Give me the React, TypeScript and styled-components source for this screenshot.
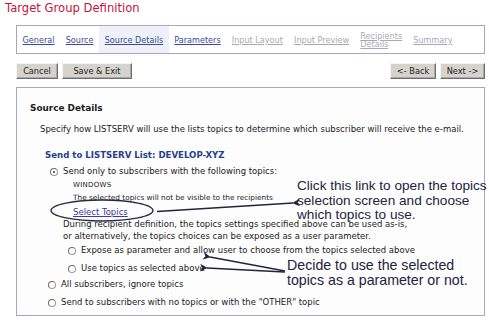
import styled, { createGlobalStyle } from 'styled-components';

const GlobalStyle = createGlobalStyle`
  html, body {
    margin: 0;
    padding: 0;
    background: #ffffff;
  }
  body {
    font-family: "DejaVu Sans", Verdana, sans-serif;
    color: #222222;
  }
`;

const Page = styled.div`
  position: relative;
  width: 489px;
  height: 328px;
  overflow: hidden;
  padding: 0 4px 0 5px;
  box-sizing: border-box;
`;

const Title = styled.h1`
  margin: 0;
  padding-top: 1px;
  font-size: 11.6px;
  font-weight: normal;
  color: #c4143c;
  line-height: 15px;
`;

const Content = styled.div`
  margin-left: 11px;
  width: 469px;
`;

const TabBar = styled.nav`
  margin-top: 9px;
  height: 29px;
  border: 1px solid #a7a3c9;
  box-sizing: border-box;
  display: flex;
  align-items: stretch;
`;

const Tab = styled.a<{ $active?: boolean; $disabled?: boolean }>`
  display: flex;
  align-items: center;
  padding: 1px 5.6px 0;
  font-size: 8.1px;
  line-height: 8.5px;
  text-decoration: underline;
  color: ${({ $disabled }) => ($disabled ? '#a9a9b4' : '#3a4a9c')};
  background: ${({ $active }) => ($active ? '#eef1f8' : 'transparent')};
  white-space: nowrap;
`;

const ButtonRow = styled.div`
  margin-top: 9px;
  display: flex;
  justify-content: space-between;
`;

const ButtonGroup = styled.div`
  display: flex;
  gap: 4px;
`;

const Button = styled.button<{ $w: number }>`
  width: ${({ $w }) => $w}px;
  height: 16px;
  padding: 0;
  font-family: "DejaVu Sans", Verdana, sans-serif;
  font-size: 8.2px;
  color: #222222;
  background: #d6d3cd;
  border: 1px solid;
  border-color: #f4f4f4 #6e6e6e #6e6e6e #f4f4f4;
  box-shadow: inset -1px -1px 0 #a8a8a8;
`;

const Panel = styled.section`
  margin-top: 8px;
  height: 229px;
  border: 1px solid #a7a3c9;
  box-sizing: border-box;
  background: #fdfdfd;
  padding: 15px 0 0 13px;
  font-size: 8.5px;
`;

const PanelTitle = styled.h2`
  margin: 0;
  font-size: 8.9px;
  font-weight: bold;
  color: #1c1c1c;
  line-height: 11px;
`;

const Intro = styled.p`
  margin: 10px 0 0 10px;
  line-height: 11px;
`;

const ListTitle = styled.h3`
  margin: 15px 0 0 15px;
  font-size: 8.6px;
  font-weight: bold;
  color: #27408e;
  line-height: 11px;
`;

const Option = styled.div<{ $indent: number; $top: number }>`
  display: flex;
  align-items: center;
  margin: ${({ $top }) => $top}px 0 0 ${({ $indent }) => $indent}px;
  line-height: 11px;
`;

const Radio = styled.span<{ $checked?: boolean }>`
  position: relative;
  width: 6px;
  height: 6px;
  border-radius: 50%;
  border: 1px solid #9a9a9a;
  border-top-color: #6c6c6c;
  border-left-color: #6c6c6c;
  background: #ffffff;
  margin-right: 5px;
  flex: none;

  &::after {
    content: '';
    display: ${({ $checked }) => ($checked ? 'block' : 'none')};
    position: absolute;
    left: 2px;
    top: 2px;
    width: 2px;
    height: 2px;
    border-radius: 50%;
    background: #333333;
  }
`;

const Detail = styled.div`
  margin-left: 43px;
`;

const Keyword = styled.div`
  margin-top: 3px;
  font-size: 7px;
  letter-spacing: 0.3px;
  line-height: 10px;
`;

const Note = styled.div`
  margin-top: 3px;
  font-size: 7.35px;
  line-height: 10px;
`;

const TopicLink = styled.a`
  display: block;
  margin-top: 4px;
  color: #3a3aa8;
  text-decoration: underline;
  line-height: 10px;
`;

const Explain = styled.p`
  margin: 1px 0 0 33px;
  line-height: 12px;
`;

const Callout = styled.div<{ $x: number; $y: number; $size: number }>`
  position: absolute;
  left: ${({ $x }) => $x}px;
  top: ${({ $y }) => $y}px;
  font-family: "Liberation Sans", Arial, sans-serif;
  font-size: ${({ $size }) => $size}px;
  line-height: 14.5px;
  color: #23233d;
  white-space: nowrap;
`;

const Overlay = styled.svg`
  position: absolute;
  left: 0;
  top: 0;
  pointer-events: none;
`;

const tabs = [
  { label: 'General' },
  { label: 'Source' },
  { label: 'Source Details', active: true },
  { label: 'Parameters' },
  { label: 'Input Layout', disabled: true },
  { label: 'Input Preview', disabled: true },
  { label: 'Recipients\nDetails', disabled: true },
  { label: 'Summary', disabled: true },
];

export default function App() {
  return (
    <Page>
      <GlobalStyle />
      <Title>Target Group Definition</Title>
      <Content>
        <TabBar>
          {tabs.map((t) => {
            const [first, second] = t.label.split('\n');
            return (
              <Tab key={t.label} $active={t.active} $disabled={t.disabled}>
                {second ? (
                  <span>
                    {first}
                    <br />
                    {second}
                  </span>
                ) : (
                  first
                )}
              </Tab>
            );
          })}
        </TabBar>

        <ButtonRow>
          <ButtonGroup>
            <Button $w={42}>Cancel</Button>
            <Button $w={70}>Save &amp; Exit</Button>
          </ButtonGroup>
          <ButtonGroup>
            <Button $w={46}>&lt;- Back</Button>
            <Button $w={45}>Next -&gt;</Button>
          </ButtonGroup>
        </ButtonRow>

        <Panel>
          <PanelTitle>Source Details</PanelTitle>
          <Intro>
            Specify how LISTSERV will use the lists topics to determine which subscriber will receive the e-mail.
          </Intro>
          <ListTitle>Send to LISTSERV List: DEVELOP-XYZ</ListTitle>
          <Option $indent={20} $top={5}>
            <Radio $checked />
            Send only to subscribers with the following topics:
          </Option>
          <Detail>
            <Keyword>WINDOWS</Keyword>
            <Note>The selected topics will not be visible to the recipients</Note>
            <TopicLink>Select Topics</TopicLink>
          </Detail>
          <Explain>
            During recipient definition, the topics settings specified above can be used as-is,
            <br />
            or alternatively, the topics choices can be exposed as a user parameter.
          </Explain>
          <Option $indent={38} $top={3}>
            <Radio />
            Expose as parameter and allow user to choose from the topics selected above
          </Option>
          <Option $indent={38} $top={7}>
            <Radio />
            Use topics as selected above
          </Option>
          <Option $indent={18} $top={5}>
            <Radio />
            All subscribers, ignore topics
          </Option>
          <Option $indent={18} $top={7}>
            <Radio />
            Send to subscribers with no topics or with the "OTHER" topic
          </Option>
        </Panel>
      </Content>

      <Callout $x={297} $y={179} $size={13.6}>
        Click this link to open the topics
        <br />
        selection screen and choose
        <br />
        which topics to use.
      </Callout>
      <Callout $x={287} $y={258} $size={14.2}>
        Decide to use the selected
        <br />
        topics as a parameter or not.
      </Callout>

      <Overlay width="489" height="328" viewBox="0 0 489 328">
        <defs>
          <marker id="head" viewBox="0 0 10 10" refX="1" refY="5" markerWidth="9" markerHeight="6" orient="auto-start-reverse">
            <path d="M0 5 L10 0 L7 5 L10 10 Z" fill="#23233d" />
          </marker>
        </defs>
        <ellipse cx="102" cy="210.5" rx="51" ry="10.5" fill="none" stroke="#2a2a44" strokeWidth="1.3" />
        <line x1="293" y1="203" x2="157" y2="211.5" stroke="#23233d" strokeWidth="1.3" markerStart="url(#head)" />
        <line x1="285" y1="271" x2="210" y2="257" stroke="#23233d" strokeWidth="1.3" markerEnd="url(#head)" />
        <line x1="285" y1="272" x2="207" y2="268" stroke="#23233d" strokeWidth="1.3" markerEnd="url(#head)" />
      </Overlay>
    </Page>
  );
}
